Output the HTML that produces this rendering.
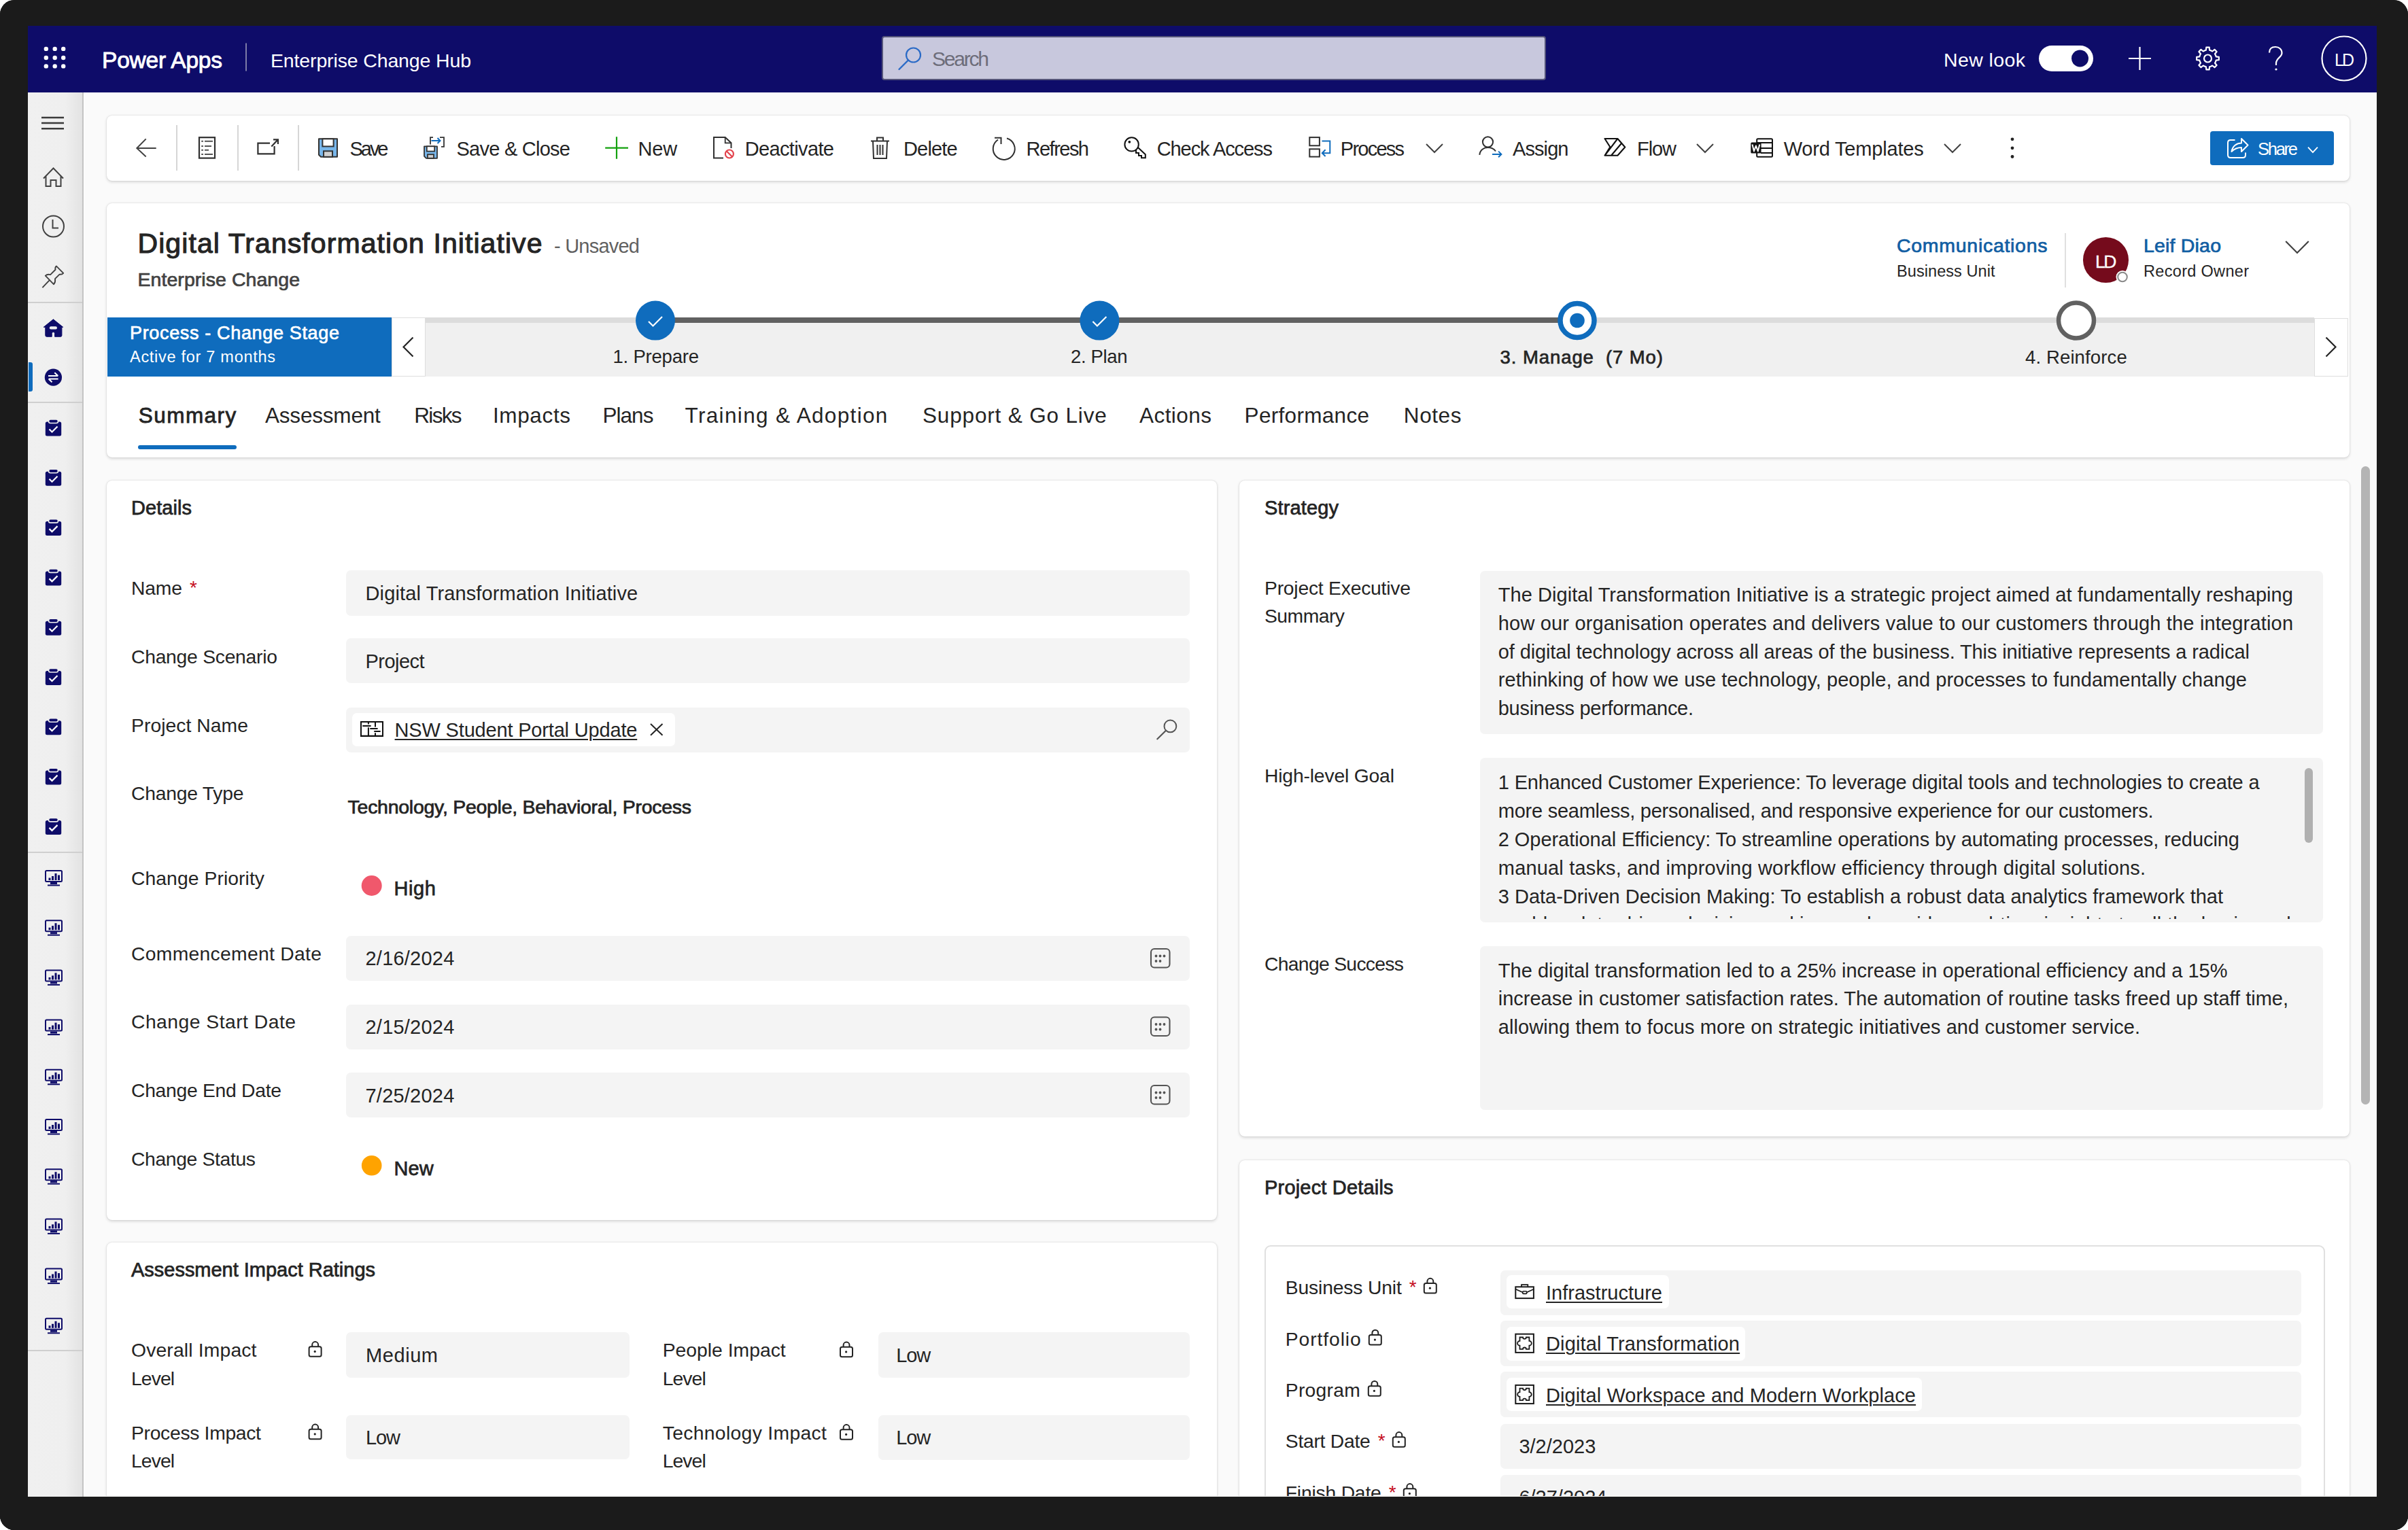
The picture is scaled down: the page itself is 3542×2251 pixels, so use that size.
<!DOCTYPE html>
<html><head><meta charset="utf-8"><title>Enterprise Change Hub</title>
<style>
html,body{margin:0;padding:0;background:#ffffff;}
body{width:3542px;height:2251px;overflow:hidden;position:relative;font-family:"Liberation Sans",sans-serif;}
.b{position:absolute;}
.t{position:absolute;white-space:nowrap;}
svg.ov{position:absolute;left:0;top:0;width:3542px;height:2251px;pointer-events:none;}
</style></head><body>
<div class="b" style="left:0.00px;top:0.00px;width:3542.00px;height:2251.00px;background:#1b1b1b;border-radius:21px;"></div>
<div class="b" style="left:41.00px;top:38.00px;width:3455.00px;height:2164.00px;background:#fafafa;overflow:hidden;"></div>
<div class="b" style="left:41.00px;top:38.00px;width:3455.00px;height:98.00px;background:#0e0c69;"></div>
<div class="t" style="left:150.00px;top:71.64px;font-size:33.50px;line-height:33.50px;color:#fff;font-weight:400;letter-spacing:-0.197px;-webkit-text-stroke:0.87px #fff;">Power Apps</div>
<div class="t" style="left:398.00px;top:74.87px;font-size:28.50px;line-height:28.50px;color:#fff;font-weight:400;letter-spacing:-0.143px;">Enterprise Change Hub</div>
<div class="b" style="left:1297.00px;top:53.00px;width:977.00px;height:65.00px;background:#c8c8dd;border:2px solid #55557a;border-radius:4px;box-sizing:border-box;"></div>
<div class="t" style="left:1371.00px;top:72.20px;font-size:30.00px;line-height:30.00px;color:#6d6d7a;font-weight:400;letter-spacing:-2.212px;">Search</div>
<div class="t" style="left:2859.00px;top:74.27px;font-size:28.50px;line-height:28.50px;color:#fff;font-weight:400;letter-spacing:0.398px;">New look</div>
<div class="b" style="left:2999.00px;top:67.00px;width:80.00px;height:38.00px;background:#fff;border-radius:19px;"></div>
<div class="t" style="left:3434.00px;top:75.83px;font-size:25.00px;line-height:25.00px;color:#fff;font-weight:400;letter-spacing:-2.959px;">LD</div>
<div class="b" style="left:41.00px;top:136.00px;width:81.00px;height:2066.00px;background:linear-gradient(90deg,#f0f0f0 0,#efefef 68%,#e2e2e2 100%);"></div>
<div class="b" style="left:121.00px;top:136.00px;width:2.00px;height:2066.00px;background:#c3c3c3;"></div>
<div class="b" style="left:123.00px;top:136.00px;width:1.00px;height:2066.00px;background:#ffffff;"></div>
<div class="b" style="left:41.00px;top:444.00px;width:80.00px;height:2.00px;background:#cfcfcf;"></div>
<div class="b" style="left:42.00px;top:533.00px;width:5.50px;height:43.00px;background:#0f6cbd;border-radius:0 3px 3px 0;"></div>
<div class="b" style="left:41.00px;top:591.00px;width:80.00px;height:2.00px;background:#cfcfcf;"></div>
<div class="b" style="left:41.00px;top:1252.50px;width:80.00px;height:2.00px;background:#cfcfcf;"></div>
<div class="b" style="left:41.00px;top:1986.00px;width:80.00px;height:2.00px;background:#cfcfcf;"></div>
<div class="b" style="left:157.00px;top:170.00px;width:3299.00px;height:96.00px;background:#fff;border-radius:8px;box-shadow:0 1.5px 4.5px rgba(0,0,0,0.14),0 0 2px rgba(0,0,0,0.12);"></div>
<div class="b" style="left:157.00px;top:299.00px;width:3299.00px;height:374.00px;background:#fff;border-radius:8px;box-shadow:0 1.5px 4.5px rgba(0,0,0,0.14),0 0 2px rgba(0,0,0,0.12);"></div>
<div class="b" style="left:157.00px;top:707.00px;width:1633.00px;height:1087.50px;background:#fff;border-radius:8px;box-shadow:0 1.5px 4.5px rgba(0,0,0,0.14),0 0 2px rgba(0,0,0,0.12);"></div>
<div class="b" style="left:157.00px;top:1827.50px;width:1633.00px;height:432.50px;background:#fff;border-radius:8px;box-shadow:0 1.5px 4.5px rgba(0,0,0,0.14),0 0 2px rgba(0,0,0,0.12);"></div>
<div class="b" style="left:1823.00px;top:707.00px;width:1633.00px;height:964.50px;background:#fff;border-radius:8px;box-shadow:0 1.5px 4.5px rgba(0,0,0,0.14),0 0 2px rgba(0,0,0,0.12);"></div>
<div class="b" style="left:1823.00px;top:1706.50px;width:1633.00px;height:553.50px;background:#fff;border-radius:8px;box-shadow:0 1.5px 4.5px rgba(0,0,0,0.14),0 0 2px rgba(0,0,0,0.12);"></div>
<div class="b" style="left:3473.00px;top:686.00px;width:13.00px;height:938.50px;background:#b4b4b4;border-radius:6.5px;"></div>
<div class="b" style="left:258.90px;top:184.00px;width:2.00px;height:66.50px;background:#d6d6d6;"></div>
<div class="b" style="left:348.70px;top:184.00px;width:2.00px;height:66.50px;background:#d6d6d6;"></div>
<div class="b" style="left:437.70px;top:184.00px;width:2.00px;height:66.50px;background:#d6d6d6;"></div>
<div class="t" style="left:514.50px;top:205.15px;font-size:29.00px;line-height:29.00px;color:#242424;font-weight:400;letter-spacing:-3.034px;">Save</div>
<div class="t" style="left:671.50px;top:205.15px;font-size:29.00px;line-height:29.00px;color:#242424;font-weight:400;letter-spacing:-0.746px;">Save &amp; Close</div>
<div class="t" style="left:938.60px;top:205.15px;font-size:29.00px;line-height:29.00px;color:#242424;font-weight:400;letter-spacing:-0.258px;">New</div>
<div class="t" style="left:1095.70px;top:205.15px;font-size:29.00px;line-height:29.00px;color:#242424;font-weight:400;letter-spacing:-0.635px;">Deactivate</div>
<div class="t" style="left:1329.00px;top:205.15px;font-size:29.00px;line-height:29.00px;color:#242424;font-weight:400;letter-spacing:-0.826px;">Delete</div>
<div class="t" style="left:1509.60px;top:205.15px;font-size:29.00px;line-height:29.00px;color:#242424;font-weight:400;letter-spacing:-1.524px;">Refresh</div>
<div class="t" style="left:1701.70px;top:205.15px;font-size:29.00px;line-height:29.00px;color:#242424;font-weight:400;letter-spacing:-1.076px;">Check Access</div>
<div class="t" style="left:1971.80px;top:205.15px;font-size:29.00px;line-height:29.00px;color:#242424;font-weight:400;letter-spacing:-1.760px;">Process</div>
<div class="t" style="left:2225.00px;top:205.15px;font-size:29.00px;line-height:29.00px;color:#242424;font-weight:400;letter-spacing:-0.909px;">Assign</div>
<div class="t" style="left:2408.00px;top:205.15px;font-size:29.00px;line-height:29.00px;color:#242424;font-weight:400;letter-spacing:-1.077px;">Flow</div>
<div class="t" style="left:2623.70px;top:205.15px;font-size:29.00px;line-height:29.00px;color:#242424;font-weight:400;letter-spacing:-0.190px;">Word Templates</div>
<div class="b" style="left:3251.00px;top:193.00px;width:182.00px;height:49.50px;background:#0f6cbd;border-radius:4px;"></div>
<div class="t" style="left:3321.00px;top:206.91px;font-size:25.50px;line-height:25.50px;color:#fff;font-weight:400;letter-spacing:-2.262px;">Share</div>
<div class="t" style="left:202.50px;top:338.19px;font-size:41.00px;line-height:41.00px;color:#242424;font-weight:400;letter-spacing:1.076px;-webkit-text-stroke:1.07px #242424;">Digital Transformation Initiative</div>
<div class="t" style="left:815.00px;top:348.35px;font-size:29.00px;line-height:29.00px;color:#616161;font-weight:400;letter-spacing:-0.772px;">- Unsaved</div>
<div class="t" style="left:202.50px;top:397.27px;font-size:28.50px;line-height:28.50px;color:#424242;font-weight:400;letter-spacing:0.053px;-webkit-text-stroke:0.74px #424242;">Enterprise Change</div>
<div class="t" style="left:2790.00px;top:347.17px;font-size:28.50px;line-height:28.50px;color:#115ea3;font-weight:400;letter-spacing:0.711px;-webkit-text-stroke:0.74px #115ea3;">Communications</div>
<div class="t" style="left:2790.00px;top:388.10px;font-size:23.50px;line-height:23.50px;color:#242424;font-weight:400;letter-spacing:0.069px;">Business Unit</div>
<div class="b" style="left:3037.00px;top:343.00px;width:2.00px;height:80.00px;background:#e0e0e0;"></div>
<div class="b" style="left:3064.10px;top:349.10px;width:66.60px;height:66.60px;background:#750b1c;border-radius:50%;"></div>
<div class="t" style="left:3082.00px;top:371.56px;font-size:26.50px;line-height:26.50px;color:#fff;font-weight:400;letter-spacing:-2.377px;-webkit-text-stroke:0.35px #fff;">LD</div>
<div class="t" style="left:3153.00px;top:347.17px;font-size:28.50px;line-height:28.50px;color:#115ea3;font-weight:400;letter-spacing:0.189px;-webkit-text-stroke:0.74px #115ea3;">Leif Diao</div>
<div class="t" style="left:3153.00px;top:388.10px;font-size:23.50px;line-height:23.50px;color:#242424;font-weight:400;letter-spacing:0.318px;">Record Owner</div>
<div class="b" style="left:158.00px;top:467.00px;width:418.00px;height:86.60px;background:#0f6cbd;"></div>
<div class="t" style="left:191.00px;top:477.14px;font-size:27.00px;line-height:27.00px;color:#fff;font-weight:400;letter-spacing:0.658px;-webkit-text-stroke:0.70px #fff;">Process - Change Stage</div>
<div class="t" style="left:191.00px;top:514.10px;font-size:23.50px;line-height:23.50px;color:#fff;font-weight:400;letter-spacing:0.714px;">Active for 7 months</div>
<div class="b" style="left:576.00px;top:467.00px;width:50.00px;height:86.60px;background:#fff;border:1.5px solid #dedede;box-sizing:border-box;"></div>
<div class="b" style="left:626.00px;top:467.00px;width:2777.50px;height:86.60px;background:#f0f0f0;"></div>
<div class="b" style="left:3403.50px;top:467.50px;width:50.00px;height:86.10px;background:#fff;border:1.5px solid #dedede;box-sizing:border-box;"></div>
<div class="b" style="left:626.00px;top:467.00px;width:338.00px;height:8.00px;background:#dcdcdc;"></div>
<div class="b" style="left:964.00px;top:466.50px;width:1356.00px;height:8.50px;background:#616161;"></div>
<div class="b" style="left:2320.00px;top:467.00px;width:1083.50px;height:8.00px;background:#dcdcdc;"></div>
<div class="t" style="left:901.50px;top:510.72px;font-size:27.50px;line-height:27.50px;color:#242424;font-weight:400;letter-spacing:-0.213px;">1. Prepare</div>
<div class="t" style="left:1575.00px;top:510.72px;font-size:27.50px;line-height:27.50px;color:#242424;font-weight:400;letter-spacing:-0.353px;">2. Plan</div>
<div class="t" style="left:2206.60px;top:511.72px;font-size:27.50px;line-height:27.50px;color:#242424;font-weight:400;letter-spacing:0.919px;-webkit-text-stroke:0.71px #242424;white-space:pre;">3. Manage  (7 Mo)</div>
<div class="t" style="left:2979.00px;top:511.72px;font-size:27.50px;line-height:27.50px;color:#242424;font-weight:400;letter-spacing:0.130px;">4. Reinforce</div>
<div class="t" style="left:203.80px;top:596.33px;font-size:31.50px;line-height:31.50px;color:#242424;font-weight:400;letter-spacing:1.454px;-webkit-text-stroke:0.82px #242424;">Summary</div>
<div class="t" style="left:390.00px;top:596.33px;font-size:31.50px;line-height:31.50px;color:#242424;font-weight:400;letter-spacing:-0.196px;">Assessment</div>
<div class="t" style="left:609.30px;top:596.33px;font-size:31.50px;line-height:31.50px;color:#242424;font-weight:400;letter-spacing:-1.699px;">Risks</div>
<div class="t" style="left:725.00px;top:596.33px;font-size:31.50px;line-height:31.50px;color:#242424;font-weight:400;letter-spacing:0.620px;">Impacts</div>
<div class="t" style="left:886.40px;top:596.33px;font-size:31.50px;line-height:31.50px;color:#242424;font-weight:400;letter-spacing:-0.950px;">Plans</div>
<div class="t" style="left:1007.50px;top:596.33px;font-size:31.50px;line-height:31.50px;color:#242424;font-weight:400;letter-spacing:1.340px;">Training &amp; Adoption</div>
<div class="t" style="left:1357.00px;top:596.33px;font-size:31.50px;line-height:31.50px;color:#242424;font-weight:400;letter-spacing:0.837px;">Support &amp; Go Live</div>
<div class="t" style="left:1676.00px;top:596.33px;font-size:31.50px;line-height:31.50px;color:#242424;font-weight:400;letter-spacing:0.450px;">Actions</div>
<div class="t" style="left:1830.60px;top:596.33px;font-size:31.50px;line-height:31.50px;color:#242424;font-weight:400;letter-spacing:0.307px;">Performance</div>
<div class="t" style="left:2064.80px;top:596.33px;font-size:31.50px;line-height:31.50px;color:#242424;font-weight:400;letter-spacing:0.603px;">Notes</div>
<div class="b" style="left:203.00px;top:655.00px;width:145.00px;height:5.50px;background:#0f6cbd;border-radius:3px;"></div>
<div class="t" style="left:193.00px;top:733.35px;font-size:29.00px;line-height:29.00px;color:#242424;font-weight:400;letter-spacing:0.059px;-webkit-text-stroke:0.75px #242424;">Details</div>
<div class="t" style="left:193.00px;top:851.04px;font-size:28.30px;line-height:28.30px;color:#242424;font-weight:400;letter-spacing:-0.164px;">Name</div>
<div class="t" style="left:279.00px;top:851.29px;font-size:28.00px;line-height:28.00px;color:#c50f1f;font-weight:400;">*</div>
<div class="b" style="left:509.00px;top:839.00px;width:1241.00px;height:66.50px;background:#f4f4f4;border-radius:7px;"></div>
<div class="t" style="left:537.50px;top:859.45px;font-size:29.00px;line-height:29.00px;color:#242424;font-weight:400;letter-spacing:0.131px;">Digital Transformation Initiative</div>
<div class="t" style="left:193.00px;top:951.74px;font-size:28.30px;line-height:28.30px;color:#242424;font-weight:400;letter-spacing:-0.264px;">Change Scenario</div>
<div class="b" style="left:509.00px;top:939.00px;width:1241.00px;height:66.00px;background:#f4f4f4;border-radius:7px;"></div>
<div class="t" style="left:537.50px;top:959.45px;font-size:29.00px;line-height:29.00px;color:#242424;font-weight:400;letter-spacing:-0.543px;">Project</div>
<div class="t" style="left:193.00px;top:1052.54px;font-size:28.30px;line-height:28.30px;color:#242424;font-weight:400;letter-spacing:0.051px;">Project Name</div>
<div class="b" style="left:509.00px;top:1040.50px;width:1241.00px;height:66.00px;background:#f4f4f4;border-radius:7px;"></div>
<div class="b" style="left:518.00px;top:1048.60px;width:474.50px;height:49.10px;background:#fff;border-radius:7px;"></div>
<div class="t" style="left:580.60px;top:1060.45px;font-size:29.00px;line-height:29.00px;color:#242424;font-weight:400;letter-spacing:-0.178px;text-decoration:underline;text-underline-offset:3px;text-decoration-thickness:2px;">NSW Student Portal Update</div>
<div class="t" style="left:193.00px;top:1152.64px;font-size:28.30px;line-height:28.30px;color:#242424;font-weight:400;letter-spacing:-0.234px;">Change Type</div>
<div class="t" style="left:511.60px;top:1173.27px;font-size:28.50px;line-height:28.50px;color:#242424;font-weight:400;letter-spacing:-0.278px;-webkit-text-stroke:0.74px #242424;">Technology, People, Behavioral, Process</div>
<div class="t" style="left:193.00px;top:1277.84px;font-size:28.30px;line-height:28.30px;color:#242424;font-weight:400;letter-spacing:0.068px;">Change Priority</div>
<div class="t" style="left:579.40px;top:1293.25px;font-size:29.00px;line-height:29.00px;color:#242424;font-weight:400;letter-spacing:0.652px;-webkit-text-stroke:0.75px #242424;">High</div>
<div class="t" style="left:193.00px;top:1389.04px;font-size:28.30px;line-height:28.30px;color:#242424;font-weight:400;letter-spacing:0.297px;">Commencement Date</div>
<div class="b" style="left:509.00px;top:1376.50px;width:1241.00px;height:66.00px;background:#f4f4f4;border-radius:7px;"></div>
<div class="t" style="left:537.50px;top:1396.45px;font-size:29.00px;line-height:29.00px;color:#242424;font-weight:400;letter-spacing:0.223px;">2/16/2024</div>
<div class="t" style="left:193.00px;top:1489.44px;font-size:28.30px;line-height:28.30px;color:#242424;font-weight:400;letter-spacing:0.475px;">Change Start Date</div>
<div class="b" style="left:509.00px;top:1477.50px;width:1241.00px;height:66.00px;background:#f4f4f4;border-radius:7px;"></div>
<div class="t" style="left:537.50px;top:1497.45px;font-size:29.00px;line-height:29.00px;color:#242424;font-weight:400;letter-spacing:0.223px;">2/15/2024</div>
<div class="t" style="left:193.00px;top:1590.34px;font-size:28.30px;line-height:28.30px;color:#242424;font-weight:400;letter-spacing:-0.285px;">Change End Date</div>
<div class="b" style="left:509.00px;top:1578.00px;width:1241.00px;height:66.00px;background:#f4f4f4;border-radius:7px;"></div>
<div class="t" style="left:537.50px;top:1597.75px;font-size:29.00px;line-height:29.00px;color:#242424;font-weight:400;letter-spacing:0.223px;">7/25/2024</div>
<div class="t" style="left:193.00px;top:1690.84px;font-size:28.30px;line-height:28.30px;color:#242424;font-weight:400;letter-spacing:-0.352px;">Change Status</div>
<div class="t" style="left:579.40px;top:1705.45px;font-size:29.00px;line-height:29.00px;color:#242424;font-weight:400;letter-spacing:0.092px;-webkit-text-stroke:0.75px #242424;">New</div>
<div class="t" style="left:193.00px;top:1854.05px;font-size:29.00px;line-height:29.00px;color:#242424;font-weight:400;letter-spacing:-0.017px;-webkit-text-stroke:0.75px #242424;">Assessment Impact Ratings</div>
<div class="t" style="left:193.00px;top:1972.44px;font-size:28.30px;line-height:28.30px;color:#242424;font-weight:400;letter-spacing:0.159px;">Overall Impact</div>
<div class="t" style="left:193.00px;top:2013.54px;font-size:28.30px;line-height:28.30px;color:#242424;font-weight:400;letter-spacing:-0.914px;">Level</div>
<div class="b" style="left:509.00px;top:1960.00px;width:417.00px;height:66.50px;background:#f4f4f4;border-radius:7px;"></div>
<div class="t" style="left:538.00px;top:1980.45px;font-size:29.00px;line-height:29.00px;color:#242424;font-weight:400;letter-spacing:0.571px;">Medium</div>
<div class="t" style="left:193.00px;top:2093.94px;font-size:28.30px;line-height:28.30px;color:#242424;font-weight:400;letter-spacing:-0.309px;">Process Impact</div>
<div class="t" style="left:193.00px;top:2135.04px;font-size:28.30px;line-height:28.30px;color:#242424;font-weight:400;letter-spacing:-0.914px;">Level</div>
<div class="b" style="left:509.00px;top:2082.00px;width:417.00px;height:65.00px;background:#f4f4f4;border-radius:7px;"></div>
<div class="t" style="left:538.00px;top:2101.15px;font-size:29.00px;line-height:29.00px;color:#242424;font-weight:400;letter-spacing:-1.101px;">Low</div>
<div class="t" style="left:974.70px;top:1972.04px;font-size:28.30px;line-height:28.30px;color:#242424;font-weight:400;letter-spacing:0.007px;">People Impact</div>
<div class="t" style="left:974.70px;top:2014.04px;font-size:28.30px;line-height:28.30px;color:#242424;font-weight:400;letter-spacing:-0.914px;">Level</div>
<div class="b" style="left:1291.50px;top:1960.00px;width:458.00px;height:67.00px;background:#f4f4f4;border-radius:7px;"></div>
<div class="t" style="left:1318.30px;top:1980.45px;font-size:29.00px;line-height:29.00px;color:#242424;font-weight:400;letter-spacing:-1.101px;">Low</div>
<div class="t" style="left:974.70px;top:2094.04px;font-size:28.30px;line-height:28.30px;color:#242424;font-weight:400;letter-spacing:0.333px;">Technology Impact</div>
<div class="t" style="left:974.70px;top:2135.04px;font-size:28.30px;line-height:28.30px;color:#242424;font-weight:400;letter-spacing:-0.914px;">Level</div>
<div class="b" style="left:1291.50px;top:2081.50px;width:458.00px;height:66.00px;background:#f4f4f4;border-radius:7px;"></div>
<div class="t" style="left:1318.30px;top:2101.45px;font-size:29.00px;line-height:29.00px;color:#242424;font-weight:400;letter-spacing:-1.101px;">Low</div>
<div class="t" style="left:1860.00px;top:733.15px;font-size:29.00px;line-height:29.00px;color:#242424;font-weight:400;letter-spacing:0.143px;-webkit-text-stroke:0.75px #242424;">Strategy</div>
<div class="t" style="left:1860.00px;top:850.74px;font-size:28.30px;line-height:28.30px;color:#242424;font-weight:400;letter-spacing:-0.227px;">Project Executive</div>
<div class="t" style="left:1860.00px;top:892.44px;font-size:28.30px;line-height:28.30px;color:#242424;font-weight:400;letter-spacing:-0.514px;">Summary</div>
<div class="b" style="left:2176.50px;top:839.50px;width:1240.50px;height:240.50px;background:#f4f4f4;border-radius:7px;"></div>
<div class="t" style="left:2203.80px;top:861.15px;font-size:29.00px;line-height:29.00px;color:#242424;font-weight:400;letter-spacing:0.058px;white-space:pre;">The Digital Transformation Initiative is a strategic project aimed at fundamentally reshaping</div>
<div class="t" style="left:2203.80px;top:902.90px;font-size:29.00px;line-height:29.00px;color:#242424;font-weight:400;letter-spacing:0.170px;white-space:pre;">how our organisation operates and delivers value to our customers through the integration</div>
<div class="t" style="left:2203.80px;top:944.65px;font-size:29.00px;line-height:29.00px;color:#242424;font-weight:400;letter-spacing:-0.125px;white-space:pre;">of digital technology across all areas of the business. This initiative represents a radical</div>
<div class="t" style="left:2203.80px;top:986.40px;font-size:29.00px;line-height:29.00px;color:#242424;font-weight:400;letter-spacing:0.047px;white-space:pre;">rethinking of how we use technology, people, and processes to fundamentally change</div>
<div class="t" style="left:2203.80px;top:1028.15px;font-size:29.00px;line-height:29.00px;color:#242424;font-weight:400;letter-spacing:-0.309px;white-space:pre;">business performance.</div>
<div class="t" style="left:1860.00px;top:1127.24px;font-size:28.30px;line-height:28.30px;color:#242424;font-weight:400;letter-spacing:-0.177px;">High-level Goal</div>
<div class="b" style="left:2176.50px;top:1115.30px;width:1240.50px;height:242.20px;background:#f4f4f4;border-radius:7px;overflow:hidden;"></div>
<div class="t" style="left:2203.80px;top:1136.85px;font-size:29.00px;line-height:29.00px;color:#242424;font-weight:400;letter-spacing:-0.153px;white-space:pre;">1 Enhanced Customer Experience: To leverage digital tools and technologies to create a</div>
<div class="t" style="left:2203.80px;top:1178.80px;font-size:29.00px;line-height:29.00px;color:#242424;font-weight:400;letter-spacing:-0.249px;white-space:pre;">more seamless, personalised, and responsive experience for our customers.</div>
<div class="t" style="left:2203.80px;top:1220.75px;font-size:29.00px;line-height:29.00px;color:#242424;font-weight:400;letter-spacing:-0.059px;white-space:pre;">2 Operational Efficiency: To streamline operations by automating processes, reducing</div>
<div class="t" style="left:2203.80px;top:1262.70px;font-size:29.00px;line-height:29.00px;color:#242424;font-weight:400;letter-spacing:0.178px;white-space:pre;">manual tasks, and improving workflow efficiency through digital solutions.</div>
<div class="t" style="left:2203.80px;top:1304.65px;font-size:29.00px;line-height:29.00px;color:#242424;font-weight:400;letter-spacing:-0.004px;white-space:pre;">3 Data-Driven Decision Making: To establish a robust data analytics framework that</div>
<div class="b" style="left:2176.5px;top:1345px;width:1200px;height:7px;overflow:hidden;"><div class="t" style="left:27.3px;top:1.45px;font-size:29px;line-height:29px;color:#242424;letter-spacing:0.35px;white-space:pre;">enables data-driven decision making, and provides real-time insights to all the business leaders</div></div>
<div class="t" style="left:1860.00px;top:1404.04px;font-size:28.30px;line-height:28.30px;color:#242424;font-weight:400;letter-spacing:-0.689px;">Change Success</div>
<div class="b" style="left:2176.50px;top:1391.70px;width:1240.50px;height:241.30px;background:#f4f4f4;border-radius:7px;"></div>
<div class="t" style="left:2203.80px;top:1414.05px;font-size:29.00px;line-height:29.00px;color:#242424;font-weight:400;letter-spacing:0.015px;white-space:pre;">The digital transformation led to a 25% increase in operational efficiency and a 15%</div>
<div class="t" style="left:2203.80px;top:1455.40px;font-size:29.00px;line-height:29.00px;color:#242424;font-weight:400;letter-spacing:-0.006px;white-space:pre;">increase in customer satisfaction rates. The automation of routine tasks freed up staff time,</div>
<div class="t" style="left:2203.80px;top:1496.75px;font-size:29.00px;line-height:29.00px;color:#242424;font-weight:400;letter-spacing:0.084px;white-space:pre;">allowing them to focus more on strategic initiatives and customer service.</div>
<div class="t" style="left:1860.00px;top:1733.25px;font-size:29.00px;line-height:29.00px;color:#242424;font-weight:400;letter-spacing:0.188px;-webkit-text-stroke:0.75px #242424;">Project Details</div>
<div class="b" style="left:1859.50px;top:1832.00px;width:1560.50px;height:468.00px;background:#fff;border:2px solid #e0e0e0;border-radius:9px;box-sizing:border-box;"></div>
<div class="t" style="left:1890.80px;top:1879.84px;font-size:28.30px;line-height:28.30px;color:#242424;font-weight:400;letter-spacing:-0.169px;">Business Unit</div>
<div class="t" style="left:2072.80px;top:1880.09px;font-size:28.00px;line-height:28.00px;color:#c50f1f;font-weight:400;">*</div>
<div class="b" style="left:2207.00px;top:1868.60px;width:1177.50px;height:66.00px;background:#f4f4f4;border-radius:7px;"></div>
<div class="t" style="left:1890.80px;top:1955.74px;font-size:28.30px;line-height:28.30px;color:#242424;font-weight:400;letter-spacing:0.897px;">Portfolio</div>
<div class="b" style="left:2207.00px;top:1943.00px;width:1177.50px;height:66.80px;background:#f4f4f4;border-radius:7px;"></div>
<div class="t" style="left:1890.80px;top:2030.94px;font-size:28.30px;line-height:28.30px;color:#242424;font-weight:400;letter-spacing:0.246px;">Program</div>
<div class="b" style="left:2207.00px;top:2018.20px;width:1177.50px;height:66.80px;background:#f4f4f4;border-radius:7px;"></div>
<div class="t" style="left:1890.80px;top:2106.04px;font-size:28.30px;line-height:28.30px;color:#242424;font-weight:400;letter-spacing:-0.267px;">Start Date</div>
<div class="t" style="left:2026.80px;top:2106.29px;font-size:28.00px;line-height:28.00px;color:#c50f1f;font-weight:400;">*</div>
<div class="b" style="left:2207.00px;top:2094.50px;width:1177.50px;height:66.00px;background:#f4f4f4;border-radius:7px;"></div>
<div class="t" style="left:1890.80px;top:2182.04px;font-size:28.30px;line-height:28.30px;color:#242424;font-weight:400;letter-spacing:-0.213px;">Finish Date</div>
<div class="t" style="left:2042.80px;top:2182.29px;font-size:28.00px;line-height:28.00px;color:#c50f1f;font-weight:400;">*</div>
<div class="b" style="left:2207.00px;top:2169.60px;width:1177.50px;height:66.40px;background:#f4f4f4;border-radius:7px;"></div>
<div class="b" style="left:2216.00px;top:1876.30px;width:238.50px;height:48.70px;background:#fff;border-radius:7px;"></div>
<div class="t" style="left:2274.00px;top:1888.45px;font-size:29.00px;line-height:29.00px;color:#242424;font-weight:400;letter-spacing:0.012px;text-decoration:underline;text-underline-offset:3px;text-decoration-thickness:2px;white-space:pre;">Infrastructure</div>
<div class="b" style="left:2216.00px;top:1951.50px;width:351.30px;height:50.20px;background:#fff;border-radius:7px;"></div>
<div class="t" style="left:2274.00px;top:1963.45px;font-size:29.00px;line-height:29.00px;color:#242424;font-weight:400;letter-spacing:0.140px;text-decoration:underline;text-underline-offset:3px;text-decoration-thickness:2px;white-space:pre;">Digital Transformation</div>
<div class="b" style="left:2216.00px;top:2026.60px;width:610.50px;height:49.90px;background:#fff;border-radius:7px;"></div>
<div class="t" style="left:2274.00px;top:2038.75px;font-size:29.00px;line-height:29.00px;color:#242424;font-weight:400;letter-spacing:0.094px;text-decoration:underline;text-underline-offset:3px;text-decoration-thickness:2px;white-space:pre;">Digital Workspace and Modern Workplace</div>
<div class="t" style="left:2234.40px;top:2113.95px;font-size:29.00px;line-height:29.00px;color:#242424;font-weight:400;letter-spacing:0.016px;">3/2/2023</div>
<div class="t" style="left:2234.40px;top:2189.15px;font-size:29.00px;line-height:29.00px;color:#242424;font-weight:400;letter-spacing:-0.002px;">6/27/2024</div>
<svg class="ov" width="3542" height="2251" viewBox="0 0 3542 2251">
<circle cx="67.8" cy="71.9" r="3.2" fill="#fff"/>
<circle cx="67.8" cy="85.0" r="3.2" fill="#fff"/>
<circle cx="67.8" cy="97.4" r="3.2" fill="#fff"/>
<circle cx="80.7" cy="71.9" r="3.2" fill="#fff"/>
<circle cx="80.7" cy="85.0" r="3.2" fill="#fff"/>
<circle cx="80.7" cy="97.4" r="3.2" fill="#fff"/>
<circle cx="93.2" cy="71.9" r="3.2" fill="#fff"/>
<circle cx="93.2" cy="85.0" r="3.2" fill="#fff"/>
<circle cx="93.2" cy="97.4" r="3.2" fill="#fff"/>
<rect x="361" y="63.5" width="2" height="41" fill="#7d7ca8"/>
<circle cx="1343.5" cy="81" r="10.5" fill="none" stroke="#2a6ac6" stroke-width="2.2"/>
<line x1="1336" y1="88.5" x2="1322.5" y2="102" stroke="#2a6ac6" stroke-width="2.4" stroke-linecap="round"/>
<circle cx="3059.5" cy="86" r="12.5" fill="#0e0c69"/>
<path d="M3131 86H3164M3147.5 69V103" stroke="#fff" stroke-width="2.2" fill="none"/>
<path d="M3259.23 81.67L3259.72 83.37L3263.85 83.80L3263.85 88.20L3259.72 88.63L3258.85 91.23L3258.85 91.23L3258.00 92.78L3260.62 96.01L3257.51 99.12L3254.28 96.50L3251.83 97.73L3251.83 97.73L3250.13 98.22L3249.70 102.35L3245.30 102.35L3244.87 98.22L3242.27 97.35L3242.27 97.35L3240.72 96.50L3237.49 99.12L3234.38 96.01L3237.00 92.78L3235.77 90.33L3235.77 90.33L3235.28 88.63L3231.15 88.20L3231.15 83.80L3235.28 83.37L3236.15 80.77L3236.15 80.77L3237.00 79.22L3234.38 75.99L3237.49 72.88L3240.72 75.50L3243.17 74.27L3243.17 74.27L3244.87 73.78L3245.30 69.65L3249.70 69.65L3250.13 73.78L3252.73 74.65L3252.73 74.65L3254.28 75.50L3257.51 72.88L3260.62 75.99L3258.00 79.22L3259.23 81.67Z" fill="none" stroke="#fff" stroke-width="2.2" stroke-linejoin="round"/>
<circle cx="3247.5" cy="86" r="5.5" fill="none" stroke="#fff" stroke-width="2.2"/>
<path d="M3338 77.5C3338 71.5 3342 69 3347 69C3352.5 69 3356.5 72.5 3356.5 78C3356.5 84 3348 85.5 3348 93V96" fill="none" stroke="#fff" stroke-width="2.2"/>
<circle cx="3348" cy="102" r="1.6" fill="#fff"/>
<circle cx="3448" cy="86" r="32.5" fill="none" stroke="#fff" stroke-width="2.2"/>
<path d="M61 173H94M61 181H94M61 189.3H94" stroke="#3b3b3b" stroke-width="2.4"/>
<path d="M64 262.5L78.5 247.5L93 262.5M67.5 259V274H74.5V265H82.5V274H89.5V259" fill="none" stroke="#424242" stroke-width="2"/>
<circle cx="78.5" cy="333" r="15.5" fill="none" stroke="#424242" stroke-width="2"/>
<path d="M77.5 323V335.5H86" fill="none" stroke="#424242" stroke-width="2"/>
<path d="M66.8 405.6C68.5 404 71.5 403.5 74.1 404.1L81.5 396.8C81 394.5 81.5 392.5 83 391.6L93.2 401.8C92 403.2 89.5 403.9 87.6 403.6L81 410.2C81.6 412.8 81 415.8 79.1 418.3ZM62.4 423.2L72.4 412.6" fill="none" stroke="#424242" stroke-width="1.9" stroke-linejoin="round"/>
<path d="M64.2 481.3L78.4 469.8L92.7 481.3H90.9V493.4Q90.9 495.3 89 495.3H80.6V490.6A2.2 2.2 0 0 0 76.2 490.6V495.3H68.7Q66.8 495.3 66.8 493.4V481.3Z" fill="#0e0c69" stroke="#0e0c69" stroke-width="1" stroke-linejoin="round"/>
<rect x="72.8" y="480.3" width="11.2" height="4.2" rx="2.1" fill="#efefef"/>
<circle cx="78.4" cy="555.2" r="12.6" fill="#0e0c69"/>
<path d="M71 552.9H85.3M80.3 548.3L85.3 552.9M85.6 557.6H71.6M76.5 562.2L71.6 557.6" fill="none" stroke="#fff" stroke-width="2"/>
<rect x="66.8" y="620.5" width="23.4" height="21" rx="2.5" fill="#0e0c69"/>
<rect x="71.5" y="617.0" width="14" height="5.5" rx="2.7" fill="#0e0c69" stroke="#efefef" stroke-width="1.6"/>
<path d="M72.5 631.5L76.5 635.5L84.5 627.5" fill="none" stroke="#fff" stroke-width="2.2"/>
<rect x="66.8" y="693.8" width="23.4" height="21" rx="2.5" fill="#0e0c69"/>
<rect x="71.5" y="690.3" width="14" height="5.5" rx="2.7" fill="#0e0c69" stroke="#efefef" stroke-width="1.6"/>
<path d="M72.5 704.8L76.5 708.8L84.5 700.8" fill="none" stroke="#fff" stroke-width="2.2"/>
<rect x="66.8" y="767.1" width="23.4" height="21" rx="2.5" fill="#0e0c69"/>
<rect x="71.5" y="763.6" width="14" height="5.5" rx="2.7" fill="#0e0c69" stroke="#efefef" stroke-width="1.6"/>
<path d="M72.5 778.1L76.5 782.1L84.5 774.1" fill="none" stroke="#fff" stroke-width="2.2"/>
<rect x="66.8" y="840.4" width="23.4" height="21" rx="2.5" fill="#0e0c69"/>
<rect x="71.5" y="836.9" width="14" height="5.5" rx="2.7" fill="#0e0c69" stroke="#efefef" stroke-width="1.6"/>
<path d="M72.5 851.4L76.5 855.4L84.5 847.4" fill="none" stroke="#fff" stroke-width="2.2"/>
<rect x="66.8" y="913.7" width="23.4" height="21" rx="2.5" fill="#0e0c69"/>
<rect x="71.5" y="910.2" width="14" height="5.5" rx="2.7" fill="#0e0c69" stroke="#efefef" stroke-width="1.6"/>
<path d="M72.5 924.7L76.5 928.7L84.5 920.7" fill="none" stroke="#fff" stroke-width="2.2"/>
<rect x="66.8" y="987.0" width="23.4" height="21" rx="2.5" fill="#0e0c69"/>
<rect x="71.5" y="983.5" width="14" height="5.5" rx="2.7" fill="#0e0c69" stroke="#efefef" stroke-width="1.6"/>
<path d="M72.5 998.0L76.5 1002.0L84.5 994.0" fill="none" stroke="#fff" stroke-width="2.2"/>
<rect x="66.8" y="1060.3" width="23.4" height="21" rx="2.5" fill="#0e0c69"/>
<rect x="71.5" y="1056.8" width="14" height="5.5" rx="2.7" fill="#0e0c69" stroke="#efefef" stroke-width="1.6"/>
<path d="M72.5 1071.3L76.5 1075.3L84.5 1067.3" fill="none" stroke="#fff" stroke-width="2.2"/>
<rect x="66.8" y="1133.6" width="23.4" height="21" rx="2.5" fill="#0e0c69"/>
<rect x="71.5" y="1130.1" width="14" height="5.5" rx="2.7" fill="#0e0c69" stroke="#efefef" stroke-width="1.6"/>
<path d="M72.5 1144.6L76.5 1148.6L84.5 1140.6" fill="none" stroke="#fff" stroke-width="2.2"/>
<rect x="66.8" y="1206.9" width="23.4" height="21" rx="2.5" fill="#0e0c69"/>
<rect x="71.5" y="1203.4" width="14" height="5.5" rx="2.7" fill="#0e0c69" stroke="#efefef" stroke-width="1.6"/>
<path d="M72.5 1217.9L76.5 1221.9L84.5 1213.9" fill="none" stroke="#fff" stroke-width="2.2"/>
<rect x="67" y="1281.0" width="24" height="16" rx="1.5" fill="none" stroke="#0e0c69" stroke-width="2"/>
<rect x="71.5" y="1291.5" width="3" height="3.5" fill="#0e0c69"/>
<rect x="76" y="1289.0" width="3" height="6" fill="#0e0c69"/>
<rect x="80.5" y="1285.0" width="3" height="10" fill="#0e0c69"/>
<rect x="85" y="1287.5" width="3" height="7.5" fill="#0e0c69"/>
<rect x="74" y="1298.0" width="10" height="3" fill="#0e0c69"/>
<rect x="70" y="1301.5" width="18" height="2" fill="#0e0c69"/>
<rect x="67" y="1354.2" width="24" height="16" rx="1.5" fill="none" stroke="#0e0c69" stroke-width="2"/>
<rect x="71.5" y="1364.7" width="3" height="3.5" fill="#0e0c69"/>
<rect x="76" y="1362.2" width="3" height="6" fill="#0e0c69"/>
<rect x="80.5" y="1358.2" width="3" height="10" fill="#0e0c69"/>
<rect x="85" y="1360.7" width="3" height="7.5" fill="#0e0c69"/>
<rect x="74" y="1371.2" width="10" height="3" fill="#0e0c69"/>
<rect x="70" y="1374.7" width="18" height="2" fill="#0e0c69"/>
<rect x="67" y="1427.4" width="24" height="16" rx="1.5" fill="none" stroke="#0e0c69" stroke-width="2"/>
<rect x="71.5" y="1437.9" width="3" height="3.5" fill="#0e0c69"/>
<rect x="76" y="1435.4" width="3" height="6" fill="#0e0c69"/>
<rect x="80.5" y="1431.4" width="3" height="10" fill="#0e0c69"/>
<rect x="85" y="1433.9" width="3" height="7.5" fill="#0e0c69"/>
<rect x="74" y="1444.4" width="10" height="3" fill="#0e0c69"/>
<rect x="70" y="1447.9" width="18" height="2" fill="#0e0c69"/>
<rect x="67" y="1500.6" width="24" height="16" rx="1.5" fill="none" stroke="#0e0c69" stroke-width="2"/>
<rect x="71.5" y="1511.1" width="3" height="3.5" fill="#0e0c69"/>
<rect x="76" y="1508.6" width="3" height="6" fill="#0e0c69"/>
<rect x="80.5" y="1504.6" width="3" height="10" fill="#0e0c69"/>
<rect x="85" y="1507.1" width="3" height="7.5" fill="#0e0c69"/>
<rect x="74" y="1517.6" width="10" height="3" fill="#0e0c69"/>
<rect x="70" y="1521.1" width="18" height="2" fill="#0e0c69"/>
<rect x="67" y="1573.8" width="24" height="16" rx="1.5" fill="none" stroke="#0e0c69" stroke-width="2"/>
<rect x="71.5" y="1584.3" width="3" height="3.5" fill="#0e0c69"/>
<rect x="76" y="1581.8" width="3" height="6" fill="#0e0c69"/>
<rect x="80.5" y="1577.8" width="3" height="10" fill="#0e0c69"/>
<rect x="85" y="1580.3" width="3" height="7.5" fill="#0e0c69"/>
<rect x="74" y="1590.8" width="10" height="3" fill="#0e0c69"/>
<rect x="70" y="1594.3" width="18" height="2" fill="#0e0c69"/>
<rect x="67" y="1647.0" width="24" height="16" rx="1.5" fill="none" stroke="#0e0c69" stroke-width="2"/>
<rect x="71.5" y="1657.5" width="3" height="3.5" fill="#0e0c69"/>
<rect x="76" y="1655.0" width="3" height="6" fill="#0e0c69"/>
<rect x="80.5" y="1651.0" width="3" height="10" fill="#0e0c69"/>
<rect x="85" y="1653.5" width="3" height="7.5" fill="#0e0c69"/>
<rect x="74" y="1664.0" width="10" height="3" fill="#0e0c69"/>
<rect x="70" y="1667.5" width="18" height="2" fill="#0e0c69"/>
<rect x="67" y="1720.2" width="24" height="16" rx="1.5" fill="none" stroke="#0e0c69" stroke-width="2"/>
<rect x="71.5" y="1730.7" width="3" height="3.5" fill="#0e0c69"/>
<rect x="76" y="1728.2" width="3" height="6" fill="#0e0c69"/>
<rect x="80.5" y="1724.2" width="3" height="10" fill="#0e0c69"/>
<rect x="85" y="1726.7" width="3" height="7.5" fill="#0e0c69"/>
<rect x="74" y="1737.2" width="10" height="3" fill="#0e0c69"/>
<rect x="70" y="1740.7" width="18" height="2" fill="#0e0c69"/>
<rect x="67" y="1793.4" width="24" height="16" rx="1.5" fill="none" stroke="#0e0c69" stroke-width="2"/>
<rect x="71.5" y="1803.9" width="3" height="3.5" fill="#0e0c69"/>
<rect x="76" y="1801.4" width="3" height="6" fill="#0e0c69"/>
<rect x="80.5" y="1797.4" width="3" height="10" fill="#0e0c69"/>
<rect x="85" y="1799.9" width="3" height="7.5" fill="#0e0c69"/>
<rect x="74" y="1810.4" width="10" height="3" fill="#0e0c69"/>
<rect x="70" y="1813.9" width="18" height="2" fill="#0e0c69"/>
<rect x="67" y="1866.6" width="24" height="16" rx="1.5" fill="none" stroke="#0e0c69" stroke-width="2"/>
<rect x="71.5" y="1877.1" width="3" height="3.5" fill="#0e0c69"/>
<rect x="76" y="1874.6" width="3" height="6" fill="#0e0c69"/>
<rect x="80.5" y="1870.6" width="3" height="10" fill="#0e0c69"/>
<rect x="85" y="1873.1" width="3" height="7.5" fill="#0e0c69"/>
<rect x="74" y="1883.6" width="10" height="3" fill="#0e0c69"/>
<rect x="70" y="1887.1" width="18" height="2" fill="#0e0c69"/>
<rect x="67" y="1939.8" width="24" height="16" rx="1.5" fill="none" stroke="#0e0c69" stroke-width="2"/>
<rect x="71.5" y="1950.3" width="3" height="3.5" fill="#0e0c69"/>
<rect x="76" y="1947.8" width="3" height="6" fill="#0e0c69"/>
<rect x="80.5" y="1943.8" width="3" height="10" fill="#0e0c69"/>
<rect x="85" y="1946.3" width="3" height="7.5" fill="#0e0c69"/>
<rect x="74" y="1956.8" width="10" height="3" fill="#0e0c69"/>
<rect x="70" y="1960.3" width="18" height="2" fill="#0e0c69"/>
<path d="M229.7 218H202M214.7 204.4L201.3 218L214.7 230.4" fill="none" stroke="#424242" stroke-width="2"/>
<rect x="293" y="202.2" width="23" height="30.4" fill="none" stroke="#303030" stroke-width="2.2"/>
<rect x="296.2" y="206.8" width="2.8" height="2" fill="#555"/>
<rect x="301" y="206.8" width="12.0" height="2" fill="#555"/>
<rect x="296.2" y="214.0" width="2.8" height="2" fill="#555"/>
<rect x="301" y="214.0" width="10.0" height="2" fill="#555"/>
<rect x="296.2" y="219.8" width="2.8" height="2" fill="#555"/>
<rect x="301" y="219.8" width="6.0" height="2" fill="#555"/>
<rect x="296.2" y="226.0" width="2.8" height="2" fill="#555"/>
<rect x="301" y="226.0" width="12.0" height="2" fill="#555"/>
<path d="M397 210.6H379.4V226.3H403.6V215" fill="none" stroke="#303030" stroke-width="2.2"/>
<path d="M399.3 215.4L408.5 205.7M402 205.3H408.9V212" fill="none" stroke="#303030" stroke-width="2.2"/>
<path d="M469.0 204.3H496.0V230.8H472.0L469.0 227.8Z" fill="#78b6ea" stroke="#333" stroke-width="2.0" stroke-linejoin="round"/>
<rect x="474.4" y="204.3" width="16.2" height="11.1" fill="#fff" stroke="#333" stroke-width="2.0"/>
<rect x="476.0" y="222.3" width="13.0" height="8.5" fill="#d0d0d0" stroke="#333" stroke-width="2.0"/>
<path d="M624.0 215.3H643.0V232.8H627.0L624.0 229.8Z" fill="#78b6ea" stroke="#333" stroke-width="1.8" stroke-linejoin="round"/>
<rect x="627.8" y="215.3" width="11.4" height="7.3" fill="#fff" stroke="#333" stroke-width="1.8"/>
<rect x="628.9" y="227.2" width="9.1" height="5.6" fill="#d0d0d0" stroke="#333" stroke-width="1.8"/>
<path d="M633 212.5V202.2H637M647 202.2H653V215.8H649" fill="none" stroke="#333" stroke-width="1.8"/>
<path d="M634.5 207H647M643.5 203L647.5 207L643.5 211" fill="none" stroke="#0f6cbd" stroke-width="2"/>
<path d="M890.2 217.6H924M907 201.2V233.8" stroke="#13a10e" stroke-width="2.2" fill="none"/>
<path d="M1075.5 218V210.3L1066.7 202H1050V232.5H1064" fill="none" stroke="#303030" stroke-width="2"/><path d="M1066.7 202V210.3H1075.5" fill="none" stroke="#303030" stroke-width="1.8"/>
<circle cx="1072.9" cy="226.5" r="6" fill="#fff" stroke="#e3424c" stroke-width="2.2"/><path d="M1068.9 222.5L1076.9 230.5" stroke="#e3424c" stroke-width="2.2"/>
<path d="M1281 207.5H1308M1290 207.5V202.5H1299V207.5M1284 207.5L1285 233H1304L1305 207.5M1290.5 213V228M1294.5 213V228M1298.5 213V228" fill="none" stroke="#303030" stroke-width="2"/>
<path d="M1468 205.5A16 16 0 1 0 1481 203.5" fill="none" stroke="#303030" stroke-width="2"/><path d="M1463 202.8H1472.5V212" fill="none" stroke="#303030" stroke-width="2"/>
<circle cx="1664.6" cy="212.4" r="10.2" fill="none" stroke="#111" stroke-width="2"/><path d="M1673.6 216.7L1684.8 227.2V232.3H1679V228.9H1675V224.9H1671V220.4" fill="none" stroke="#111" stroke-width="2"/><circle cx="1661.3" cy="208.8" r="1.9" fill="#111"/>
<rect x="1926.3" y="202.1" width="14.6" height="12.2" fill="none" stroke="#303030" stroke-width="2"/><rect x="1926.3" y="219.3" width="14.6" height="11.3" fill="none" stroke="#303030" stroke-width="2"/>
<path d="M1944.5 207.5H1956.3V225.3H1945M1949.6 220.3L1944.8 225.3L1949.6 230" fill="none" stroke="#0f6cbd" stroke-width="2"/>
<path d="M2098.0 212.0L2110.0 224.0L2122.0 212.0" fill="none" stroke="#424242" stroke-width="2.0"/>
<circle cx="2188.5" cy="208.8" r="7.6" fill="none" stroke="#303030" stroke-width="2"/><path d="M2176.3 227.8C2177 220.5 2182.5 217 2188.5 217C2193.5 217 2197.5 219 2200 222.5" fill="none" stroke="#303030" stroke-width="2"/>
<path d="M2195 226.9H2208.4M2204.1 222.6L2208.4 226.9L2204.1 231.2" fill="none" stroke="#0f6cbd" stroke-width="2"/>
<path d="M2360.5 204H2379.4L2390.3 216.5L2379.4 228.8H2360.5L2368.3 216.3ZM2379.4 204L2360.5 228.8M2385 211L2370 228.8" fill="none" stroke="#111" stroke-width="2.1" stroke-linejoin="round"/>
<path d="M2496.0 212.0L2508.0 224.0L2520.0 212.0" fill="none" stroke="#424242" stroke-width="2.0"/>
<rect x="2584.2" y="204.2" width="22.8" height="26.5" rx="1.5" fill="none" stroke="#111" stroke-width="2"/><path d="M2584 210H2606M2590 217.9H2606M2590 225H2606" stroke="#111" stroke-width="2"/>
<rect x="2575.3" y="209.4" width="15.3" height="16.2" rx="1.5" fill="#111"/><path d="M2577.5 212.5L2580 222.5L2582.9 214.5L2585.8 222.5L2588.3 212.5" fill="none" stroke="#fff" stroke-width="2" stroke-linejoin="round"/>
<path d="M2860.0 212.0L2872.0 224.0L2884.0 212.0" fill="none" stroke="#424242" stroke-width="2.0"/>
<circle cx="2960" cy="204.8" r="2.4" fill="#242424"/>
<circle cx="2960" cy="217.8" r="2.4" fill="#242424"/>
<circle cx="2960" cy="230.5" r="2.4" fill="#242424"/>
<path d="M3287.5 206H3281C3278.5 206 3277 207.5 3277 210V228C3277 230.5 3278.5 232 3281 232H3299C3301.5 232 3303 230.5 3303 228V224.5" fill="none" stroke="#fff" stroke-width="2"/>
<path d="M3282.5 223C3284 214.5 3290.5 210.5 3297 210.5V204L3306.5 213.5L3297 223V217C3291.5 217 3286.5 219 3282.5 223Z" fill="none" stroke="#fff" stroke-width="2" stroke-linejoin="round"/>
<path d="M3395.0 216.6L3402.0 224.1L3409.0 216.6" fill="none" stroke="#fff" stroke-width="1.8"/>
<circle cx="3122" cy="407.5" r="9.5" fill="#fff"/><circle cx="3122" cy="407.5" r="6.8" fill="#fff" stroke="#8a8a8a" stroke-width="2"/>
<path d="M3362.2 355.0L3379.0 372.0L3395.8 355.0" fill="none" stroke="#424242" stroke-width="2.2"/>
<path d="M607.5 496.5L593.5 510.5L607.5 524.5" fill="none" stroke="#242424" stroke-width="2.2"/>
<path d="M3421.5 496.5L3435.5 510.5L3421.5 524.5" fill="none" stroke="#242424" stroke-width="2.2"/>
<circle cx="964.0" cy="471.6" r="29" fill="#0f6cbd"/>
<path d="M954.0 473L960.5 479.5L974.0 466" fill="none" stroke="#fff" stroke-width="2.2"/>
<circle cx="1617.4" cy="471.6" r="29" fill="#0f6cbd"/>
<path d="M1607.4 473L1613.9 479.5L1627.4 466" fill="none" stroke="#fff" stroke-width="2.2"/>
<circle cx="2320" cy="471.5" r="25" fill="#fff" stroke="#0f6cbd" stroke-width="7.5"/>
<circle cx="2320" cy="471.5" r="10.8" fill="#0f6cbd"/>
<circle cx="3054" cy="471.5" r="26" fill="#fff" stroke="#616161" stroke-width="6.5"/>
<rect x="531" y="1062" width="32" height="21" fill="none" stroke="#111" stroke-width="2"/><path d="M531 1082.5H563" stroke="#111" stroke-width="1.6"/><path d="M541.9 1062V1064.8M541.9 1071V1082M534 1067.9H544.9M552 1062V1068.7M552 1079V1082M545 1071.9H554.9M551 1075.9H558.9" fill="none" stroke="#111" stroke-width="2" stroke-linecap="round"/>
<path d="M957 1065L974.5 1081.7M974.5 1065L957 1081.7" stroke="#242424" stroke-width="2"/>
<circle cx="1721.4" cy="1068.4" r="8.9" fill="none" stroke="#555" stroke-width="2"/><path d="M1715 1074.8L1702.3 1087.3" stroke="#555" stroke-width="2.2" stroke-linecap="round"/>
<circle cx="546.7" cy="1303" r="15" fill="#f0586c"/>
<rect x="1693.0" y="1396.0" width="27.5" height="27.5" rx="5" fill="none" stroke="#555" stroke-width="2.1"/>
<circle cx="1700.5" cy="1406.5" r="1.9" fill="#555"/>
<circle cx="1706.5" cy="1406.5" r="1.9" fill="#555"/>
<circle cx="1712.5" cy="1406.5" r="1.9" fill="#555"/>
<circle cx="1700.5" cy="1414.0" r="1.9" fill="#555"/>
<circle cx="1706.5" cy="1414.0" r="1.9" fill="#555"/>
<rect x="1693.0" y="1496.5" width="27.5" height="27.5" rx="5" fill="none" stroke="#555" stroke-width="2.1"/>
<circle cx="1700.5" cy="1507.0" r="1.9" fill="#555"/>
<circle cx="1706.5" cy="1507.0" r="1.9" fill="#555"/>
<circle cx="1712.5" cy="1507.0" r="1.9" fill="#555"/>
<circle cx="1700.5" cy="1514.5" r="1.9" fill="#555"/>
<circle cx="1706.5" cy="1514.5" r="1.9" fill="#555"/>
<rect x="1693.0" y="1597.0" width="27.5" height="27.5" rx="5" fill="none" stroke="#555" stroke-width="2.1"/>
<circle cx="1700.5" cy="1607.5" r="1.9" fill="#555"/>
<circle cx="1706.5" cy="1607.5" r="1.9" fill="#555"/>
<circle cx="1712.5" cy="1607.5" r="1.9" fill="#555"/>
<circle cx="1700.5" cy="1615.0" r="1.9" fill="#555"/>
<circle cx="1706.5" cy="1615.0" r="1.9" fill="#555"/>
<circle cx="546.7" cy="1714.8" r="14.8" fill="#ffa300"/>
<path d="M459.2 1981.5V1978.5A4.45 4.45 0 0 1 468.1 1978.5V1981.5" fill="none" stroke="#242424" stroke-width="2"/>
<rect x="454.6" y="1981.3" width="18" height="14.5" rx="2.5" fill="none" stroke="#242424" stroke-width="2"/>
<circle cx="463.2" cy="1988.4" r="1.6" fill="#242424"/>
<path d="M459.2 2103.0V2100.0A4.45 4.45 0 0 1 468.1 2100.0V2103.0" fill="none" stroke="#242424" stroke-width="2"/>
<rect x="454.6" y="2102.8" width="18" height="14.5" rx="2.5" fill="none" stroke="#242424" stroke-width="2"/>
<circle cx="463.2" cy="2109.9" r="1.6" fill="#242424"/>
<path d="M1240.6 1982.0V1979.0A4.45 4.45 0 0 1 1249.5 1979.0V1982.0" fill="none" stroke="#242424" stroke-width="2"/>
<rect x="1236.0" y="1981.8" width="18" height="14.5" rx="2.5" fill="none" stroke="#242424" stroke-width="2"/>
<circle cx="1244.6" cy="1988.9" r="1.6" fill="#242424"/>
<path d="M1240.6 2103.5V2100.5A4.45 4.45 0 0 1 1249.5 2100.5V2103.5" fill="none" stroke="#242424" stroke-width="2"/>
<rect x="1236.0" y="2103.3" width="18" height="14.5" rx="2.5" fill="none" stroke="#242424" stroke-width="2"/>
<circle cx="1244.6" cy="2110.4" r="1.6" fill="#242424"/>
<rect x="3390" y="1130" width="12" height="110" rx="6" fill="#b0b0b0"/>
<path d="M2099.4 1888.3V1885.3A4.45 4.45 0 0 1 2108.3 1885.3V1888.3" fill="none" stroke="#242424" stroke-width="2"/>
<rect x="2094.8" y="1888.1" width="18" height="14.5" rx="2.5" fill="none" stroke="#242424" stroke-width="2"/>
<circle cx="2103.4" cy="1895.2" r="1.6" fill="#242424"/>
<path d="M2018.4 1964.2V1961.2A4.45 4.45 0 0 1 2027.3 1961.2V1964.2" fill="none" stroke="#242424" stroke-width="2"/>
<rect x="2013.8" y="1964.0" width="18" height="14.5" rx="2.5" fill="none" stroke="#242424" stroke-width="2"/>
<circle cx="2022.4" cy="1971.1" r="1.6" fill="#242424"/>
<path d="M2017.4 2039.4V2036.4A4.45 4.45 0 0 1 2026.3 2036.4V2039.4" fill="none" stroke="#242424" stroke-width="2"/>
<rect x="2012.8" y="2039.2" width="18" height="14.5" rx="2.5" fill="none" stroke="#242424" stroke-width="2"/>
<circle cx="2021.4" cy="2046.3" r="1.6" fill="#242424"/>
<path d="M2053.4 2114.5V2111.5A4.45 4.45 0 0 1 2062.3 2111.5V2114.5" fill="none" stroke="#242424" stroke-width="2"/>
<rect x="2048.8" y="2114.3" width="18" height="14.5" rx="2.5" fill="none" stroke="#242424" stroke-width="2"/>
<circle cx="2057.4" cy="2121.4" r="1.6" fill="#242424"/>
<path d="M2069.4 2190.5V2187.5A4.45 4.45 0 0 1 2078.3 2187.5V2190.5" fill="none" stroke="#242424" stroke-width="2"/>
<rect x="2064.8" y="2190.3" width="18" height="14.5" rx="2.5" fill="none" stroke="#242424" stroke-width="2"/>
<circle cx="2073.4" cy="2197.4" r="1.6" fill="#242424"/>
<rect x="2229.3" y="1893.3" width="26.6" height="16.8" fill="none" stroke="#1a1a1a" stroke-width="2"/><path d="M2238 1893V1890.2H2247.3V1893M2229 1896.5L2239.6 1901.2M2245.9 1901.2L2256.5 1896.5" fill="none" stroke="#1a1a1a" stroke-width="1.8"/><rect x="2239.8" y="1899.8" width="5.9" height="3.6" rx="1" fill="#fff" stroke="#1a1a1a" stroke-width="1.6"/>
<rect x="2229.3" y="1962.7" width="26.6" height="27.2" fill="none" stroke="#1a1a1a" stroke-width="2"/>
<path d="M2235.5 1967.5H2240.1A2.4 2.4 0 0 0 2244.9 1967.5H2249.4V1972.9A3.4 3.4 0 0 1 2249.4 1979.7V1984.9H2244.9A2.4 2.4 0 0 0 2240.1 1984.9H2235.5V1979.7A3.4 3.4 0 0 1 2235.5 1972.9Z" fill="none" stroke="#1a1a1a" stroke-width="1.8"/>
<rect x="2229.3" y="2037.9" width="26.6" height="27.2" fill="none" stroke="#1a1a1a" stroke-width="2"/>
<path d="M2235.5 2042.7H2240.1A2.4 2.4 0 0 0 2244.9 2042.7H2249.4V2048.1A3.4 3.4 0 0 1 2249.4 2054.9V2060.1H2244.9A2.4 2.4 0 0 0 2240.1 2060.1H2235.5V2054.9A3.4 3.4 0 0 1 2235.5 2048.1Z" fill="none" stroke="#1a1a1a" stroke-width="1.8"/>
</svg>
<div class="b" style="left:123.00px;top:2200.50px;width:3373.00px;height:1.50px;background:#f4f4f2;"></div>
<div class="b" style="left:0.00px;top:2202.00px;width:3542.00px;height:49.00px;background:#1b1b1b;border-radius:0 0 21px 21px;"></div>
<div class="b" style="left:3496.00px;top:0.00px;width:46.00px;height:2251.00px;background:#1b1b1b;border-radius:0 21px 21px 0;"></div>
<div class="b" style="left:0.00px;top:0.00px;width:41.00px;height:2251.00px;background:#1b1b1b;border-radius:21px 0 0 21px;"></div>
</body></html>
